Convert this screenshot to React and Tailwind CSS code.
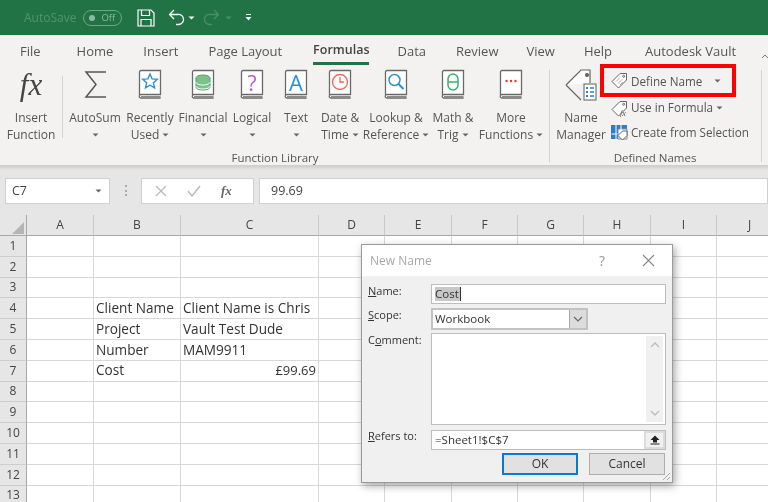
import React from 'react';

const SANS = "font-['Open_Sans','Noto_Sans',sans-serif]";

function Caret({ className = '', color = '#666' }) {
  return <svg width="7" height="4" viewBox="0 0 7 4" className={className}><path d="M0.5 0.5h6L3.5 3.5z" fill={color} /></svg>;
}

function Book({ children }) {
  return (
    <svg width="24" height="31" viewBox="0 0 24 31" fill="none" className="overflow-visible">
      <path d="M1.5 26V3a1.5 1.5 0 0 1 1.5-1.5h19.500V25.500H3a1.600 1.600 0 0 0 0 3.500h19.500" stroke="#6a6a6a" strokeWidth="1.300" fill="#fff" />
      <path d="M3 27h19.500v2.500H3z" fill="#8a8a8a" />
      {children}
    </svg>
  );
}

function Tool({ w, icon, l1, l2, caret, ml = 0 }) {
  return (
    <div className="flex flex-col items-center shrink-0" style={{ width: w, marginLeft: ml }}>
      <div className="h-[39px] flex items-center justify-center">{icon}</div>
      <div className="text-[12px] leading-[17px] mt-[5px] whitespace-nowrap text-[#555]">{l1}</div>
      <div className="text-[12px] leading-[17px] whitespace-nowrap text-[#555] flex items-center gap-[3px] h-[17px]">
        {l2 ? <span>{l2}</span> : null}
        {caret ? <Caret /> : null}
      </div>
    </div>
  );
}

const tabs = [
  ['File', 'ml-[20px]'], ['Home', 'ml-[36px]'], ['Insert', 'ml-[30px]'], ['Page Layout', 'ml-[30px]'],
  ['Formulas', 'ml-[31px]'], ['Data', 'ml-[28px]'], ['Review', 'ml-[30px]'], ['View', 'ml-[28px]'],
  ['Help', 'ml-[29px]'], ['Autodesk Vault', 'ml-[33px]'],
];

const columns = ['A', 'B', 'C', 'D', 'E', 'F', 'G', 'H', 'I', 'J'];
const cells = {
  4: { B: 'Client Name', C: 'Client Name is Chris' },
  5: { B: 'Project', C: 'Vault Test Dude' },
  6: { B: 'Number', C: 'MAM9911' },
  7: { B: 'Cost', C: '£99.69' },
};
const rows = Array.from({ length: 13 }, (_, i) => i + 1);

function Tag({ small }) {
  return (
    <svg width="17" height="17" viewBox="0 0 17 17" fill="none" stroke="#666" strokeWidth="1">
      <path d="M1 9.500 9 1.500h6.500V8l-8 8z" fill="#fff" />
      <circle cx="12.700" cy="4.300" r="1" />
      {small
        ? <text x="9" y="16" fontSize="8" fontStyle="italic" fill="#555" stroke="none" fontFamily="'Liberation Serif', serif">fx</text>
        : <path d="M5 9.500l4-4M7 11.500l4-4M9 13l3-3" stroke="#aaa" />}
    </svg>
  );
}

function Dialog() {
  const lab = 'text-[11px] leading-none text-[#333] w-[63px] shrink-0 pt-[1px] font-medium';
  return (
    <div className={`absolute left-[361px] top-[244px] w-[312px] h-[239px] bg-[#f0f0f0] border border-[#9a9a9a] shadow-[2px_3px_8px_rgba(0,0,0,0.35)] flex flex-col ${SANS}`}>
      <div className="h-[31px] bg-white flex items-center shrink-0">
        <span className="ml-[8px] text-[12px] text-[#a8a8a8]">New Name</span>
        <span className="ml-auto mr-[37px] text-[14px] text-[#999]">?</span>
        <svg width="13" height="13" viewBox="0 0 13 13" className="mr-[17px]" stroke="#888" strokeWidth="1.100"><path d="M1 1l11 11M12 1L1 12" /></svg>
      </div>
      <div className="flex flex-col pl-[6px] pr-[6px] pt-[8px] relative grow">
        <div className="flex h-[20px]">
          <div className={lab}><u>N</u>ame:</div>
          <div className="w-[235px] h-[20px] bg-white border border-[#bdbdbd] flex items-center pl-[3px]">
            <span className="bg-[#c8c8c8] text-[11.500px] leading-[14px] text-[#333] pr-[1px] border-r border-[#333]">Cost</span>
          </div>
        </div>
        <div className="flex h-[22px] mt-[4px]">
          <div className={lab}><u>S</u>cope:</div>
          <div className="w-[157px] h-[22px] bg-white border-2 border-[#c2c2c2] flex items-center pl-[2px] text-[11.500px] text-[#333]">
            Workbook
            <div className="ml-auto w-[17px] h-full bg-[#dcdcdc] border-l border-[#a8a8a8] flex items-center justify-center">
              <svg width="10" height="6" viewBox="0 0 10 6" fill="none" stroke="#666" strokeWidth="1.200"><path d="M1 1l4 4 4-4" /></svg>
            </div>
          </div>
        </div>
        <div className="flex h-[92px] mt-[3px]">
          <div className={lab}>C<u>o</u>mment:</div>
          <div className="w-[235px] h-[92px] bg-white border border-[#bdbdbd] flex justify-end">
            <div className="w-[17px] m-[2px] bg-[#f0f0f0] flex flex-col justify-between items-center py-[6px]">
              <svg width="10" height="6" viewBox="0 0 10 6" fill="none" stroke="#bbb" strokeWidth="1.300"><path d="M1 5l4-4 4 4" /></svg>
              <svg width="10" height="6" viewBox="0 0 10 6" fill="none" stroke="#bbb" strokeWidth="1.300"><path d="M1 1l4 4 4-4" /></svg>
            </div>
          </div>
        </div>
        <div className="flex h-[20px] mt-[5px]">
          <div className="text-[11px] leading-none text-[#333] w-[63px] shrink-0 font-medium"><u>R</u>efers to:</div>
          <div className="w-[235px] h-[20px] bg-white border border-[#bdbdbd] flex items-center pl-[3px] text-[11.500px] text-[#333]">
            =Sheet1!$C$7
            <div className="ml-auto w-[21px] h-full bg-[#f0f0f0] border-2 border-[#dcdcdc] flex items-center justify-center">
              <svg width="10" height="10" viewBox="0 0 10 10" fill="#222"><path d="M5 0.500 9.500 5H7v2.500H3V5H0.500zM0.500 8.500h9v1h-9z" /></svg>
            </div>
          </div>
        </div>
        <div className="flex justify-end mt-[3px] gap-[11px] pr-[1px]">
          <div className="w-[76px] h-[22px] bg-[#e1e1e1] border-2 border-[#0a78d7] flex items-center justify-center text-[12px] text-[#333]">OK</div>
          <div className="w-[76px] h-[22px] bg-[#e1e1e1] border border-[#adadad] flex items-center justify-center text-[12px] text-[#333]">Cancel</div>
        </div>
        <svg width="9" height="9" viewBox="0 0 9 9" className="absolute right-[1px] bottom-[1px]" stroke="#aaa"><path d="M8 1 1 8M8 5 5 8" /></svg>
      </div>
    </div>
  );
}

export default function App() {
  return (
    <div className={`relative w-[768px] h-[502px] overflow-hidden flex flex-col bg-white blur-[0.35px] ${SANS}`}>
      <div className="h-[35px] bg-[#217346] flex items-center shrink-0">
        <span className="ml-[24px] text-[12px] text-[#55936f]">AutoSave</span>
        <div className="ml-[7px] w-[39px] h-[16px] rounded-full border border-[#6fa588] flex items-center px-[5px] gap-[6px]">
          <span className="w-[6px] h-[6px] rounded-full bg-[#8dbba2]" />
          <span className="text-[9.500px] leading-none text-[#8dbba2]">Off</span>
        </div>
        <svg width="18" height="18" viewBox="0 0 18 18" fill="none" stroke="#fff" strokeWidth="1.200" className="ml-[15px]">
          <path d="M1 1h13l3 3v13H1zM4.500 1v5.500h8V1M4 17v-6.500h10V17" />
        </svg>
        <svg width="17" height="17" viewBox="0 0 17 17" fill="none" stroke="#fff" strokeWidth="1.300" className="ml-[13px]">
          <path d="M6 1 1.500 5.500 6 10M1.500 5.500H10a5 5 0 0 1 1 10H8" />
        </svg>
        <Caret color="#fff" className="ml-[3px]" />
        <svg width="17" height="17" viewBox="0 0 17 17" fill="none" stroke="#4a8f69" strokeWidth="1.300" className="ml-[8px]">
          <path d="M11 1l4.500 4.500L11 10M15.500 5.500H7a5 5 0 0 0-1 10h3" />
        </svg>
        <Caret color="#4a8f69" className="ml-[5px]" />
        <svg width="7" height="7" viewBox="0 0 7 7" className="ml-[13px]" fill="#fff"><path d="M1 0h5v1H1zM0.500 3h6L3.500 6.500z" /></svg>
      </div>

      <div className="h-[30px] bg-[#f3f2f1] flex items-center shrink-0 relative text-[13px] text-[#555]">
        {tabs.map(([t, m]) => (
          <div key={t} className={`${m} h-full flex items-center whitespace-nowrap relative pt-[3px] ${t === 'Formulas' ? 'font-semibold text-[12.500px] text-[#444] border-b-[3px] border-[#217346]' : ''}`}>{t}</div>
        ))}
        <svg width="6" height="4" viewBox="0 0 6 4" className="ml-auto mt-[11px]" fill="none" stroke="#777"><path d="M0 4 3 1l3 3" /></svg>
      </div>

      <div className="h-[100px] bg-[#f3f2f1] flex shrink-0 relative">
        <div className="flex flex-col w-[62px] shrink-0 items-center">
          <Tool w={62} l1="Insert" l2="Function" icon={<span className="font-['Liberation_Serif',serif] italic text-[31px] leading-none text-[#444]">fx</span>} />
        </div>
        <div className="w-px bg-[#d2d2d2] h-[62px] mt-[11px] shrink-0" />
        <div className="flex flex-col shrink-0 w-[486px]">
          <div className="flex h-[86px]">
            <Tool w={58} ml={3} l1="AutoSum" caret icon={<svg width="23" height="27" viewBox="0 0 23 27" fill="none" stroke="#555" strokeWidth="1.500"><path d="M22 1H2l10 12.500L2 26h20" /></svg>} />
            <Tool w={52} l1="Recently" l2="Used" caret icon={<Book><path d="M12 5l2.100 4.900 5.200.5-3.900 3.400 1.100 5.100L12 16.200l-4.500 2.700 1.100-5.100-3.900-3.400 5.200-.5z" stroke="#2b8fd9" strokeWidth="1.400" /></Book>} />
            <Tool w={54} l1="Financial" caret icon={<Book><ellipse cx="12" cy="9" rx="7" ry="3" fill="#7cc08a" stroke="#4aa266" /><path d="M5 9v9c0 1.700 3 3 7 3s7-1.300 7-3V9" fill="#7cc08a" stroke="#4aa266" /><path d="M5 13c0 1.700 3 3 7 3s7-1.300 7-3M5 17c0 1.700 3 3 7 3s7-1.300 7-3" stroke="#fff" /></Book>} />
            <Tool w={44} l1="Logical" caret icon={<Book><text x="12" y="22" textAnchor="middle" fontSize="21" fill="#b35cc7" fontFamily="'Open Sans', sans-serif">?</text></Book>} />
            <Tool w={44} l1="Text" caret icon={<Book><text x="12" y="22" textAnchor="middle" fontSize="22" fill="#2b8fd9" fontFamily="'Open Sans', sans-serif">A</text></Book>} />
            <Tool w={44} l1="Date &" l2="Time" caret icon={<Book><circle cx="12" cy="13" r="7.500" stroke="#ea6a5f" strokeWidth="1.400" /><path d="M12 8v5h4" stroke="#ea6a5f" strokeWidth="1.300" /></Book>} />
            <Tool w={68} l1="Lookup &" l2="Reference" caret icon={<Book><circle cx="10.500" cy="11" r="5.500" stroke="#2b8fd9" strokeWidth="1.500" /><path d="M14.500 15l5 5" stroke="#2b8fd9" strokeWidth="2" /></Book>} />
            <Tool w={46} l1="Math &" l2="Trig" caret icon={<Book><rect x="7" y="5" width="10" height="16" rx="5" stroke="#35b36a" strokeWidth="1.500" /><path d="M7 13h10" stroke="#35b36a" strokeWidth="1.500" /></Book>} />
            <Tool w={70} l1="More" l2="Functions" caret icon={<Book><circle cx="7.500" cy="12" r="1.200" fill="#ee3333" /><circle cx="12" cy="12" r="1.200" fill="#ee3333" /><circle cx="16.500" cy="12" r="1.200" fill="#ee3333" /></Book>} />
          </div>
          <div className="text-center text-[11.500px] text-[#555] leading-none mt-[1px] pr-[62px]">Function Library</div>
        </div>
        <div className="w-px bg-[#d2d2d2] h-[92px] mt-[5px] shrink-0" />
        <div className="flex flex-col shrink-0 w-[211px]">
          <div className="flex h-[86px]">
            <Tool w={62} l1="Name" l2="Manager" icon={
              <svg width="32" height="32" viewBox="0 0 32 32" fill="none" stroke="#666" strokeWidth="1.200">
                <path d="M1 16 16 1h9v13M16 31 1 16" fill="#fff" />
                <circle cx="22" cy="6" r="1.500" fill="#666" />
                <rect x="19" y="15" width="12" height="16" fill="#fff" stroke="#777" />
                <path d="M21 19h2M21 23h2M21 27h2" stroke="#2b7cd3" strokeWidth="2" />
                <path d="M25 19h4M25 23h4M25 27h4" stroke="#2b7cd3" strokeWidth="1.500" />
              </svg>} />
            <div className="flex flex-col ml-[-12px] mt-[-1px] text-[11.700px] text-[#555] whitespace-nowrap">
              <div className="w-[136px] h-[33px] border-[4px] border-[#f00] flex items-center pl-[7px] gap-[3px]">
                <Tag />
                <span className="pt-[2px]">Define Name</span>
                <Caret className="ml-[9px]" />
              </div>
              <div className="flex items-center h-[24px] mt-[-1px] pl-[11px] gap-[3px]">
                <Tag small />
                <span>Use in Formula</span>
                <Caret />
              </div>
              <div className="flex items-center h-[25px] pl-[11px] gap-[3px]">
                <svg width="17" height="15" viewBox="0 0 17 15">
                  <path d="M0 0h16v4H0z" fill="#2b7cd3" />
                  <path d="M0 4h7v10H0z" fill="#2b7cd3" />
                  <path d="M7 4h9v10H7z" fill="#fff" stroke="#888" />
                  <path d="M0.500 9h6M5 0v14M10 0v5" stroke="#fff" />
                  <path d="M7 10.500 11.500 6H16v4.500L11.500 15z" fill="#fff" stroke="#666" />
                </svg>
                <span>Create from Selection</span>
              </div>
            </div>
          </div>
          <div className="text-center text-[11.500px] text-[#555] leading-none mt-[1px] pr-[1px]">Defined Names</div>
        </div>
        <div className="w-px bg-[#d2d2d2] h-[92px] mt-[5px] shrink-0" />
      </div>

      <div className="grow bg-[#e6e6e6] flex flex-col min-h-0 shadow-[inset_0_5px_3px_-2px_#cfcfcf]">
        <div className="h-[50px] flex items-start pt-[13px] shrink-0 text-[#444]">
          <div className="ml-[5px] w-[105px] h-[26px] bg-white border border-[#d0d0d0] flex items-center pl-[6px] text-[12.500px]">
            C7
            <Caret className="ml-auto mr-[7px]" />
          </div>
          <div className="ml-[15px] w-[3px] h-[11px] mt-[7px] border-l-2 border-dotted border-[#aaa]" />
          <div className="ml-[13px] w-[113px] h-[26px] bg-white border border-[#d0d0d0] flex items-center">
            <svg width="12" height="12" viewBox="0 0 12 12" className="ml-[13px]" stroke="#bbb" strokeWidth="1.300"><path d="M1 1l10 10M11 1 1 11" /></svg>
            <svg width="14" height="12" viewBox="0 0 14 12" fill="none" className="ml-[20px]" stroke="#bbb" strokeWidth="1.500"><path d="M1 6l4 5 8-10" /></svg>
            <span className="ml-[20px] font-['Liberation_Serif',serif] italic text-[13px] text-[#666] font-bold">fx</span>
          </div>
          <div className="ml-[5px] grow h-[26px] bg-white border border-[#d0d0d0] flex items-center pl-[11px] text-[12.500px]">99.69</div>
        </div>
        <div className="grid grid-cols-[27px_67px_87px_138px_66px_67px_66px_66px_67px_66px_66px] grid-rows-[21px_repeat(13,20.800px)] overflow-hidden w-[768px] h-[287px] shrink-0 text-[13.600px] text-[#333]">
          <div className="border-b border-r border-[#a8a8a8] bg-[#e6e6e6] flex items-end justify-end pr-[2px] pb-[1px]">
            <svg width="12" height="12" viewBox="0 0 12 12"><path d="M12 0v12H0z" fill="#b5b5b5" /></svg>
          </div>
          {columns.map((c) => (
            <div key={c} className="bg-[#e6e6e6] border-b border-b-[#a8a8a8] border-r border-r-[#c8c8c8] flex items-center justify-center text-[12px] text-[#444]">{c}</div>
          ))}
          {rows.map((r) => (
            <React.Fragment key={r}>
              <div className="bg-[#e6e6e6] border-b border-r border-b-[#cdcdcd] border-r-[#a8a8a8] flex items-center justify-center text-[12px] text-[#444]">{r}</div>
              {columns.map((c) => {
                const v = cells[r] && cells[r][c];
                return (
                  <div key={c} className={`bg-white border-b border-r border-[#d8d8d8] flex items-center whitespace-nowrap px-[2px] ${v === '£99.69' ? 'justify-end text-[13px]' : ''}`}>{v || ''}</div>
                );
              })}
            </React.Fragment>
          ))}
        </div>
      </div>
      <Dialog />
    </div>
  );
}
